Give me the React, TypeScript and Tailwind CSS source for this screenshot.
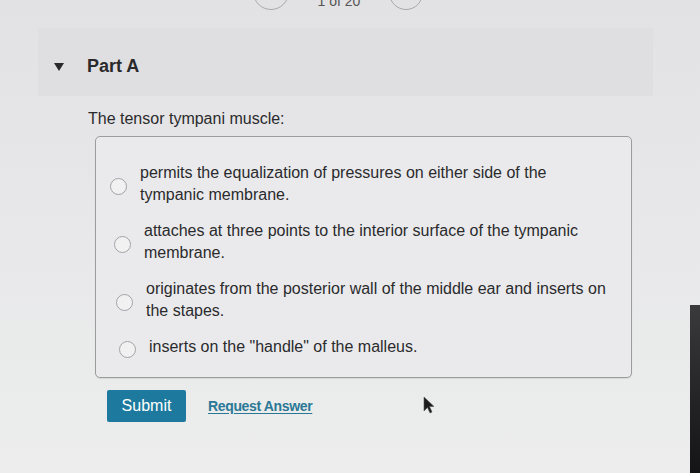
const options = [
  "permits the equalization of pressures on either side of the tympanic membrane.",
  "attaches at three points to the interior surface of the tympanic membrane.",
  "originates from the posterior wall of the middle ear and inserts on the stapes.",
  'inserts on the "handle" of the malleus.',
];

// small left shift per row to follow the photo's slant
const rowShift = ["ml-0", "ml-[4px]", "ml-[6px]", "ml-[9px]"];

export default function App() {
  return (
    <div className="relative h-[473px] w-[700px] overflow-hidden bg-gradient-to-b from-[#e2e1e3] via-[#e8e8ea] to-[#ecedec] font-['Liberation_Sans',Arial,sans-serif] text-[#2b2b2d]">
      {/* pager circles cut off at top */}
      <div className="flex h-[22px] items-end gap-0 pl-[253px]">
        <div className="-mt-[26px] h-[36px] w-[36px] self-start rounded-full border-[1.5px] border-[#a9a8ab]" />
        <div className="-mt-[9px] w-[100px] self-start text-center text-[14px] text-[#555]">
          1 of 20
        </div>
        <div className="-mt-[26px] h-[36px] w-[34px] self-start rounded-full border-[1.5px] border-[#a9a8ab]" />
      </div>

      {/* Part A header */}
      <div className="ml-[38px] mt-[6px] flex h-[68px] w-[615px] items-center bg-[#dfdee1] pl-[16px] pt-[8px]">
        <svg width="10" height="8" viewBox="0 0 10 8" className="mt-[1px]">
          <path d="M0 0 H10 L5 8 Z" fill="#2a2a2c" />
        </svg>
        <span className="ml-[23px] text-[18px] font-bold text-[#2a2a2c]">Part A</span>
      </div>

      <p className="ml-[88px] mt-[11px] text-[16px]">The tensor tympani muscle:</p>

      {/* answer choices */}
      <div className="ml-[95px] mt-[5px] flex h-[242px] w-[537px] flex-col gap-[14px] rounded-[5px] border border-[#9c9c9e] bg-[#eaeaec] pl-[14px] pr-[24px] pt-[25px] shadow-[0_1px_1px_rgba(0,0,0,0.08)]">
        {options.map((text, i) => (
          <label key={i} className={`flex items-center gap-[13px] ${rowShift[i]}`}>
            <span className="mt-[4px] h-[17px] w-[17px] shrink-0 rounded-full border border-[#a3a3a6] bg-[#f1f1f2]" />
            <span className="text-[16px] leading-[22px] text-[#2b2b2d]">{text}</span>
          </label>
        ))}
      </div>

      <div className="ml-[107px] mt-[12px] flex items-center gap-[22px]">
        <button className="h-[32px] w-[79px] rounded-[2px] bg-[#1d7a9e] text-[16px] text-white">
          Submit
        </button>
        <a className="text-[14px] font-bold tracking-tight text-[#2a7896] underline underline-offset-2">
          Request Answer
        </a>
      </div>

      {/* mouse pointer */}
      <svg
        className="absolute left-[423px] top-[396px]"
        width="14"
        height="20"
        viewBox="0 0 14 20"
      >
        <path d="M1 1 L1 15 L4.5 11.5 L7 17 L9 16 L6.5 10.5 L11 10.5 Z" fill="#1b1b1b" stroke="#555" strokeWidth="0.6" />
      </svg>

      {/* monitor bezel at the right edge */}
      <div className="absolute right-0 top-[305px] h-[168px] w-[10px] bg-gradient-to-b from-[#3a3a3c] to-[#141416]" />
    </div>
  );
}
